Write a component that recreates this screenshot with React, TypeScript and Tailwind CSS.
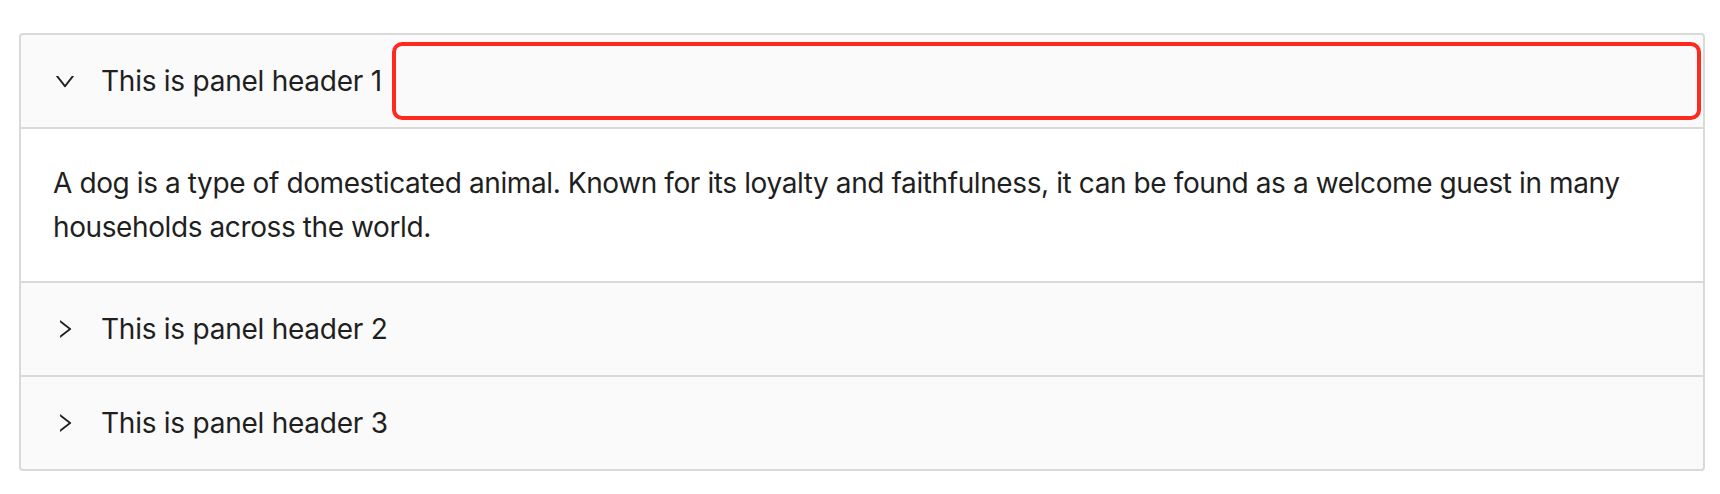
const RightArrow = ({ open }: { open: boolean }) => (
  <svg
    viewBox="0 0 1024 1024"
    width="24"
    height="24"
    fill="currentColor"
    className={open ? 'rotate-90 shrink-0' : 'shrink-0'}
  >
    <path d="M765.7 486.8L314.9 134.7A7.97 7.97 0 00302 141v77.3c0 4.9 2.3 9.6 6.1 12.6l360 281.1-360 281.1c-3.9 3-6.1 7.7-6.1 12.6V883c0 6.7 7.7 10.4 12.9 6.3l450.8-352.1a31.96 31.96 0 000-50.4z" />
  </svg>
);

const panels = [
  {
    key: '1',
    title: 'This is panel header 1',
    open: true,
  },
  { key: '2', title: 'This is panel header 2', open: false },
  { key: '3', title: 'This is panel header 3', open: false },
];

const text =
  'A dog is a type of domesticated animal. Known for its loyalty and faithfulness, it can be found as a welcome guest in many households across the world.';

const App = () => {
  return (
    <div className="min-h-[494px] bg-white pt-[33px] pl-[19px] pr-[15px] font-['Inter',sans-serif] text-[#1f1f1f]">
      <div className="relative rounded-[4px] border-2 border-[#d9d9d9] bg-[#fafafa]">
        {panels.map((p, i) => (
          <div key={p.key} className={i < panels.length - 1 ? 'border-b-2 border-[#d9d9d9]' : ''}>
            <div className="flex items-center px-[32px] py-[24px] text-[28px] leading-[44px] tracking-[-0.25px]">
              <RightArrow open={p.open} />
              <span className="ml-[24px]">{p.title}</span>
            </div>
            {p.open && (
              <div className="border-t-2 border-[#d9d9d9] bg-white p-[32px] text-[28px] leading-[44px] tracking-[-0.4px]">
                {text}
              </div>
            )}
          </div>
        ))}
        <div className="pointer-events-none absolute left-[371px] top-[7px] h-[78px] w-[1309px] rounded-[10px] border-4 border-[#ff2a1f]" />
      </div>
    </div>
  );
};

export default App;
